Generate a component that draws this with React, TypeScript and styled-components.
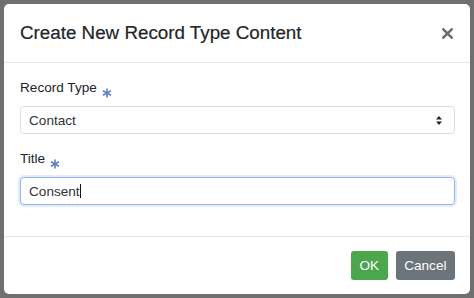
import React from "react";
import styled, { createGlobalStyle } from "styled-components";

const Global = createGlobalStyle`
  html, body { margin: 0; padding: 0; }
  body {
    background: #6f6f6f;
    font-family: "Liberation Sans", Arial, Helvetica, sans-serif;
    color: #212529;
    width: 474px;
    height: 298px;
    overflow: hidden;
  }
`;

const Overlay = styled.div`
  padding: 4px;
  box-sizing: border-box;
  width: 474px;
  height: 298px;
`;

const Modal = styled.div`
  background: #fff;
  border-radius: 5px;
  height: 290px;
  display: flex;
  flex-direction: column;
  box-sizing: border-box;
`;

const Header = styled.div`
  height: 58px;
  display: flex;
  align-items: center;
  justify-content: space-between;
  padding: 0 17px 0 16px;
  border-bottom: 1px solid #e6e6e6;
`;

const Heading = styled.h5`
  margin: 0;
  font-size: 18.8px;
  font-weight: 400;
  color: #212529;
  -webkit-text-stroke: 0.2px #212529;
`;

const Close = styled.button`
  border: 0;
  background: none;
  padding: 0;
  width: 11px;
  height: 11px;
  display: flex;
  align-items: center;
  justify-content: center;
`;

const Body = styled.div`
  flex: 1;
  padding: 16px 15px 0 16px;
  border-bottom: 1px solid #e6e6e6;
`;

const Group = styled.div<{ $last?: boolean }>`
  margin-bottom: ${(p) => (p.$last ? 0 : 16)}px;
`;

const Label = styled.label`
  display: flex;
  align-items: flex-start;
  font-size: 13.6px;
  line-height: 18px;
  color: #212529;
  height: 18px;
  margin-bottom: 9px;
`;

const Star = styled.svg`
  margin-left: 5px;
  margin-top: 9px;
  flex: none;
`;

const Field = styled.div<{ $focus?: boolean }>`
  height: 28px;
  box-sizing: border-box;
  border: 1px solid ${(p) => (p.$focus ? "#94b5ea" : "#dedede")};
  border-radius: 4px;
  box-shadow: ${(p) => (p.$focus ? "0 0 0 2px rgba(130,165,230,0.22)" : "none")};
  display: flex;
  align-items: center;
  justify-content: space-between;
  padding: 0 12px 0 8px;
  font-size: 13.6px;
  color: #333;
`;

const Value = styled.span`
  display: flex;
  align-items: center;
`;

const Caret = styled.span`
  display: inline-block;
  width: 1.5px;
  height: 14px;
  background: #111;
`;

const Footer = styled.div`
  height: 57px;
  display: flex;
  align-items: center;
  justify-content: flex-end;
  gap: 8px;
  padding: 0 15px 0 0;
`;

const Button = styled.button<{ $variant: "ok" | "cancel" }>`
  height: 29px;
  border: 0;
  border-radius: 3px;
  font-family: "Liberation Sans", Arial, sans-serif;
  font-size: 13.6px;
  color: #fff;
  padding: 0 8.5px;
  background: ${(p) => (p.$variant === "ok" ? "#4ba64d" : "#6b737b")};
`;

const Asterisk = () => (
  <Star width="10" height="10" viewBox="0 0 12 12">
    <g stroke="#5f83c6" strokeWidth="2" strokeLinecap="butt">
      <line x1="6" y1="0.5" x2="6" y2="11.5" />
      <line x1="1.2" y1="3.2" x2="10.8" y2="8.8" />
      <line x1="10.8" y1="3.2" x2="1.2" y2="8.8" />
    </g>
  </Star>
);

export default function App() {
  return (
    <>
      <Global />
      <Overlay>
        <Modal>
          <Header>
            <Heading>Create New Record Type Content</Heading>
            <Close aria-label="close">
              <svg width="11" height="11" viewBox="0 0 11 11">
                <path d="M1.3 1.3 L9.7 9.7 M9.7 1.3 L1.3 9.7" stroke="#6a6a6a" strokeWidth="2.5" strokeLinecap="round" />
              </svg>
            </Close>
          </Header>
          <Body>
            <Group>
              <Label>
                Record Type
                <Asterisk />
              </Label>
              <Field>
                <span>Contact</span>
                <svg width="6" height="9" viewBox="0 0 6 9">
                  <path d="M3 0 L6 3.6 H0 Z" fill="#222" />
                  <path d="M3 9 L6 5.4 H0 Z" fill="#222" />
                </svg>
              </Field>
            </Group>
            <Group $last>
              <Label>
                Title
                <Asterisk />
              </Label>
              <Field $focus>
                <Value>
                  Consent
                  <Caret />
                </Value>
              </Field>
            </Group>
          </Body>
          <Footer>
            <Button $variant="ok">OK</Button>
            <Button $variant="cancel">Cancel</Button>
          </Footer>
        </Modal>
      </Overlay>
    </>
  );
}
